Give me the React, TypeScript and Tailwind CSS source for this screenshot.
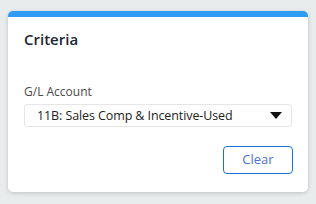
import React from 'react';

export default function App() {
  return (
    <div className="min-h-[204px] w-[316px] bg-[#e9eced] px-2 pt-[11px] pb-3 font-['Open_Sans',sans-serif]">
      <div className="flex flex-col rounded-[5px] border-t-[6px] border-[#2e9cf6] bg-white px-4 pt-3 pb-[18px] shadow-[0_1px_4px_rgba(0,0,0,0.18)]">
        <h2 className="text-[15px] leading-5 font-semibold text-[#1e2532]">Criteria</h2>

        <label className="mt-[35px] text-[12px] leading-4 text-[#4a4a4a]">G/L Account</label>
        <div className="mt-1 flex h-[23px] items-center justify-between rounded-[3px] border border-[#e6e6e6] pl-[12px] pr-[8px]">
          <span className="text-[12.5px] leading-4 font-medium tracking-[-0.1px] text-[#222]">11B: Sales Comp &amp; Incentive-Used</span>
          <svg width="12" height="7" viewBox="0 0 12 7" className="mr-[1px]">
            <path d="M0 0h12L6 7z" fill="#111" />
          </svg>
        </div>

        <div className="mt-[19px] flex justify-end">
          <button className="mr-[-1px] h-7 w-[70px] rounded-[4px] border border-[#1673dc] text-[13px] text-[#4a72d6]">
            Clear
          </button>
        </div>
      </div>
    </div>
  );
}
